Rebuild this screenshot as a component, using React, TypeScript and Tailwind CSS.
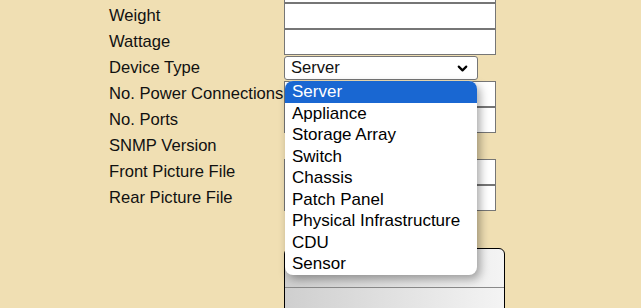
import { ChevronDown } from "lucide-react";

const rows = [
  { label: "", kind: "input" },
  { label: "Weight", kind: "input" },
  { label: "Wattage", kind: "input" },
  { label: "Device Type", kind: "select" },
  { label: "No. Power Connections", kind: "input" },
  { label: "No. Ports", kind: "input" },
  { label: "SNMP Version", kind: "none" },
  { label: "Front Picture File", kind: "input" },
  { label: "Rear Picture File", kind: "input" },
];

const deviceTypes = [
  "Server",
  "Appliance",
  "Storage Array",
  "Switch",
  "Chassis",
  "Patch Panel",
  "Physical Infrastructure",
  "CDU",
  "Sensor",
];

const App = () => {
  return (
    <div
      className="w-[641px] h-[308px] overflow-hidden bg-[#f0dfb3] text-[#111] text-[16.6px]"
      style={{ fontFamily: '"Liberation Sans", Arial, sans-serif' }}
    >
      <div className="pl-[109px] -mt-[23px]">
        {/* Form rows */}
        <div className="flex flex-col">
          {rows.map((row, idx) => (
            <div key={idx} className="flex items-center h-[26px]">
              <div className="w-[175px] whitespace-nowrap leading-none">{row.label}</div>
              {row.kind === "input" && (
                <div className="w-[212px] h-[26px] bg-white border border-[#767676]" />
              )}
              {row.kind === "select" && (
                <div className="relative">
                  <div className="w-[194px] h-[24px] bg-white border border-[#767676] rounded-[3px] flex items-center pl-[6px] pr-[7px]">
                    <span className="flex-1">Server</span>
                    <ChevronDown className="w-[15px] h-[15px] text-black" strokeWidth={3.5} />
                  </div>
                  {/* Open dropdown list */}
                  <div className="absolute z-10 left-[1px] top-[25px] w-[192px] bg-white rounded-lg overflow-hidden shadow-[3px_4px_10px_rgba(0,0,0,0.35)] text-[17px]">
                    {deviceTypes.map((t, i) => (
                      <div
                        key={t}
                        className={`h-[21.5px] flex items-center pl-[7px] whitespace-nowrap ${
                          i === 0 ? "bg-[#1967d2] text-white" : "text-black"
                        }`}
                      >
                        {t}
                      </div>
                    ))}
                  </div>
                </div>
              )}
            </div>
          ))}
        </div>

        {/* Lower panel */}
        <div className="ml-[175px] mt-[37px] w-[221px] h-[80px] rounded-t-md border border-black bg-gradient-to-r from-[#cfcfcf] to-[#f4f4f4] flex flex-col">
          <div className="h-[39px] border-b border-[#8a8a8a]" />
        </div>
      </div>
    </div>
  );
};

export default App;
